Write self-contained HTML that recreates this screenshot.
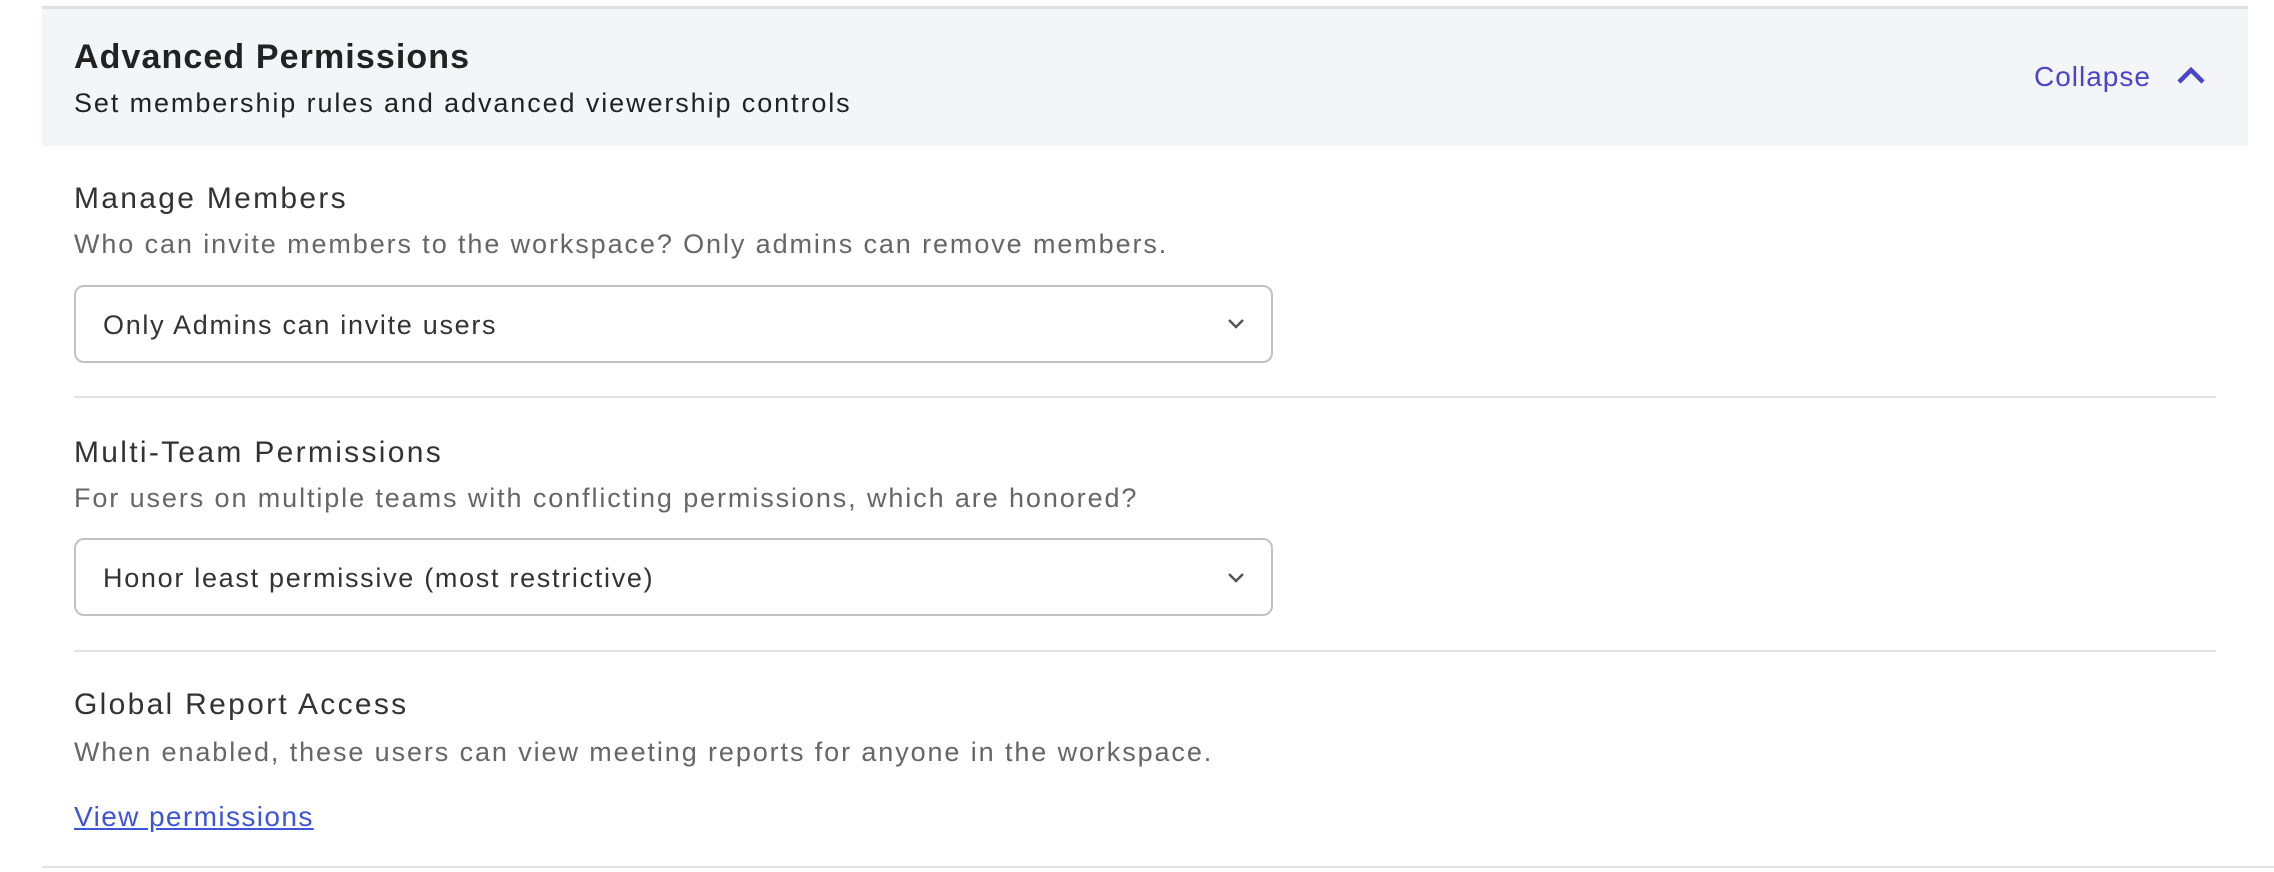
<!DOCTYPE html>
<html><head><style>
*{margin:0;padding:0;box-sizing:border-box}
body{width:2274px;height:872px;background:#fff;font-family:"Liberation Sans",sans-serif;position:relative;overflow:hidden;color:#222}
.a{position:absolute;white-space:nowrap;line-height:1}
.hdr{position:absolute;left:42px;top:6px;width:2206px;height:140px;background:#f4f5f9;border-top:3px solid #e0e0e0}
.sel{position:absolute;left:74px;width:1199px;height:78px;border:2px solid #c2c2c2;border-radius:10px}
.line{position:absolute;height:2px;background:#e2e2e2}
.h2{font-size:30px;color:#333;letter-spacing:2.3px}
.d{font-size:27px;color:#666;letter-spacing:1.9px}
.st{font-size:27px;color:#333;letter-spacing:1.7px}
</style></head><body>
<div class="hdr"></div>
<div class="a" style="left:74px;top:40px;font-size:34px;font-weight:bold;color:#222;letter-spacing:1.1px">Advanced Permissions</div>
<div class="a" style="left:74px;top:90px;font-size:27px;color:#222;letter-spacing:1.9px">Set membership rules and advanced viewership controls</div>
<div class="a" style="left:2034px;top:63px;font-size:28px;color:#4a44c9;letter-spacing:1px">Collapse</div>
<svg class="a" style="left:2176px;top:64px" width="30" height="22" viewBox="0 0 30 22"><path d="M3 18 L15 6 L27 18" fill="none" stroke="#4a44c9" stroke-width="4.5"/></svg>

<div class="a h2" style="left:74px;top:184px">Manage Members</div>
<div class="a d" style="left:74px;top:231px">Who can invite members to the workspace? Only admins can remove members.</div>
<div class="sel" style="top:285px"></div>
<div class="a st" style="left:103px;top:312px">Only Admins can invite users</div>
<svg class="a" style="left:1227px;top:318px" width="18" height="12" viewBox="0 0 18 12"><path d="M2 2 L9 9 L16 2" fill="none" stroke="#555" stroke-width="2.5"/></svg>
<div class="line" style="left:74px;top:396px;width:2142px"></div>

<div class="a h2" style="left:74px;top:438px">Multi-Team Permissions</div>
<div class="a d" style="left:74px;top:485px">For users on multiple teams with conflicting permissions, which are honored?</div>
<div class="sel" style="top:538px"></div>
<div class="a st" style="left:103px;top:565px">Honor least permissive (most restrictive)</div>
<svg class="a" style="left:1227px;top:572px" width="18" height="12" viewBox="0 0 18 12"><path d="M2 2 L9 9 L16 2" fill="none" stroke="#555" stroke-width="2.5"/></svg>
<div class="line" style="left:74px;top:650px;width:2142px"></div>

<div class="a h2" style="left:74px;top:690px">Global Report Access</div>
<div class="a d" style="left:74px;top:739px">When enabled, these users can view meeting reports for anyone in the workspace.</div>
<div class="a" style="left:74px;top:803px;font-size:28px;color:#3d55d8;text-decoration:underline;letter-spacing:1.4px">View permissions</div>
<div class="line" style="left:42px;top:866px;width:2232px"></div>
</body></html>
